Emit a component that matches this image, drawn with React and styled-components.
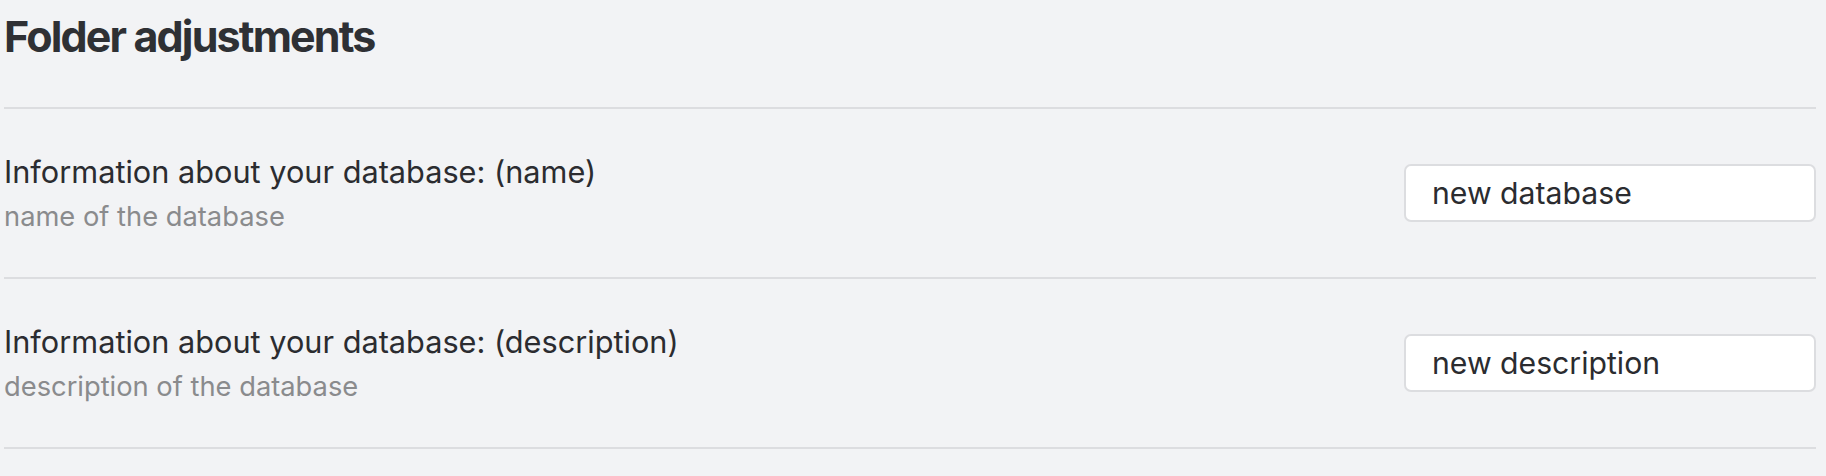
import React from "react";
import styled, { createGlobalStyle } from "styled-components";

const GlobalStyle = createGlobalStyle`
  html, body {
    margin: 0;
    padding: 0;
    background: #f2f3f5;
  }
  body {
    font-family: Inter, "Liberation Sans", Arial, sans-serif;
  }
`;

const Page = styled.div`
  box-sizing: border-box;
  width: 1826px;
  min-height: 476px;
  padding: 11px 10px 0 4px;
  background: #f2f3f5;
`;

const Title = styled.h2`
  margin: 0 0 46px;
  font-family: Inter, "Liberation Sans", Arial, sans-serif;
  font-weight: 700;
  font-size: 43px;
  line-height: 50px;
  letter-spacing: -1.85px;
  color: #2e3034;
`;

const SettingList = styled.div`
  display: flex;
  flex-direction: column;
  border-bottom: 2px solid #dcdde0;
`;

const SettingRow = styled.div`
  display: flex;
  align-items: center;
  justify-content: space-between;
  height: 170px;
  box-sizing: border-box;
  border-top: 2px solid #dcdde0;
`;

const Info = styled.div`
  display: flex;
  flex-direction: column;
  gap: 9px;
`;

const Name = styled.div`
  font-size: 30.7px;
  line-height: 38px;
  color: #2b2c30;
`;

const Description = styled.div`
  font-size: 27.3px;
  line-height: 34px;
  color: #8a8b8d;
`;

const TextInput = styled.input`
  box-sizing: border-box;
  width: 412px;
  height: 58px;
  padding: 0 26px;
  border: 2px solid #dcdde0;
  border-radius: 7px;
  background: #ffffff;
  font-family: Inter, "Liberation Sans", Arial, sans-serif;
  font-size: 30.2px;
  color: #2b2c30;
  outline: none;
`;

const settings = [
  {
    name: "Information about your database: (name)",
    desc: "name of the database",
    value: "new database",
  },
  {
    name: "Information about your database: (description)",
    desc: "description of the database",
    value: "new description",
  },
];

export default function App() {
  return (
    <>
      <GlobalStyle />
      <Page>
        <Title>Folder adjustments</Title>
        <SettingList>
          {settings.map((s) => (
            <SettingRow key={s.name}>
              <Info>
                <Name>{s.name}</Name>
                <Description>{s.desc}</Description>
              </Info>
              <TextInput type="text" defaultValue={s.value} />
            </SettingRow>
          ))}
        </SettingList>
      </Page>
    </>
  );
}
